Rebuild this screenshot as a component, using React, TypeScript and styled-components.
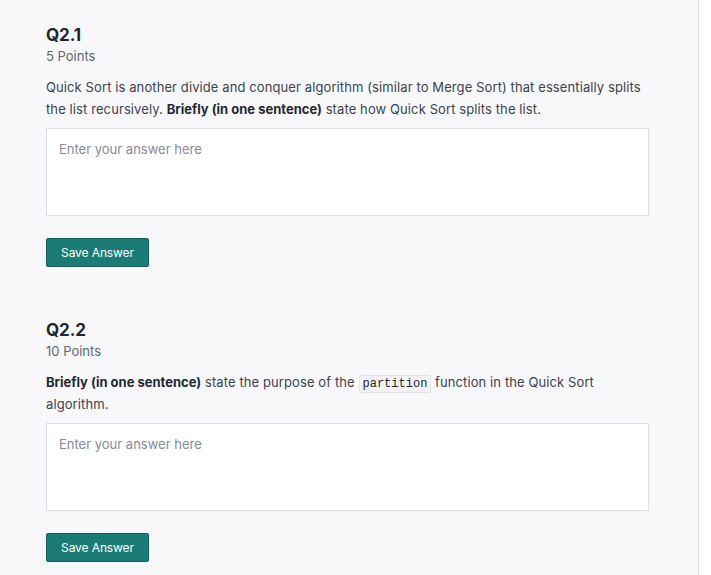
import React from "react";
import styled, { createGlobalStyle } from "styled-components";

const GlobalStyle = createGlobalStyle`
  html, body {
    margin: 0;
    padding: 0;
    background: #ffffff;
  }
  body {
    font-family: Inter, "Liberation Sans", sans-serif;
  }
`;

const Page = styled.div`
  width: 699px;
  min-height: 575px;
  background: #f8f8fa;
  border-right: 1px solid #dcdce1;
  box-sizing: border-box;
  padding: 24px 50px 0 46px;
`;

const Question = styled.section`
  display: flex;
  flex-direction: column;
  margin-bottom: 52px;
`;

const Title = styled.h2`
  margin: 0;
  font-size: 17px;
  line-height: 22px;
  font-weight: 700;
  color: #1e272e;
  letter-spacing: -0.1px;
`;

const Points = styled.div`
  margin-top: 2px;
  font-size: 13px;
  line-height: 16px;
  color: #62676e;
`;

const Prompt = styled.p`
  margin: 12px 0 8px;
  font-size: 13px;
  line-height: 22px;
  color: #3d434b;
  width: 603px;
  letter-spacing: 0.1px;

  strong {
    color: #24292f;
    font-weight: 700;
    letter-spacing: 0;
  }
`;

const Code = styled.code`
  font-family: "Liberation Mono", monospace;
  font-size: 12px;
  line-height: 12px;
  letter-spacing: 0;
  background: #f3f3f6;
  border: 1px solid #e2e3e8;
  border-radius: 2px;
  padding: 1px 3px;
  color: #1e272e;
`;

const Answer = styled.textarea`
  width: 603px;
  height: 88px;
  box-sizing: border-box;
  border: 1px solid #dcdde5;
  background: #ffffff;
  border-radius: 0;
  padding: 12px 12px;
  font-family: inherit;
  font-size: 13px;
  color: #3d434b;
  resize: none;
  outline: none;

  &::placeholder {
    color: #868b94;
  }
`;

const SaveButton = styled.button`
  align-self: flex-start;
  margin-top: 22px;
  width: 103px;
  height: 29px;
  box-sizing: border-box;
  background: #1b7b75;
  border: 1px solid #145e59;
  border-radius: 2px;
  color: #ffffff;
  font-family: inherit;
  font-size: 12px;
  letter-spacing: -0.1px;
  cursor: pointer;
`;

type Q = {
  id: string;
  points: string;
  prompt: React.ReactNode;
};

const questions: Q[] = [
  {
    id: "Q2.1",
    points: "5 Points",
    prompt: (
      <>
        Quick Sort is another divide and conquer algorithm (similar to Merge Sort) that essentially splits
        the list recursively. <strong>Briefly (in one sentence)</strong> state how Quick Sort splits the list.
      </>
    ),
  },
  {
    id: "Q2.2",
    points: "10 Points",
    prompt: (
      <>
        <strong>Briefly (in one sentence)</strong> state the purpose of the <Code>partition</Code> function
        in the Quick Sort algorithm.
      </>
    ),
  },
];

export default function App() {
  return (
    <>
      <GlobalStyle />
      <Page>
        {questions.map((q) => (
          <Question key={q.id}>
            <Title>{q.id}</Title>
            <Points>{q.points}</Points>
            <Prompt>{q.prompt}</Prompt>
            <Answer placeholder="Enter your answer here" />
            <SaveButton>Save Answer</SaveButton>
          </Question>
        ))}
      </Page>
    </>
  );
}
